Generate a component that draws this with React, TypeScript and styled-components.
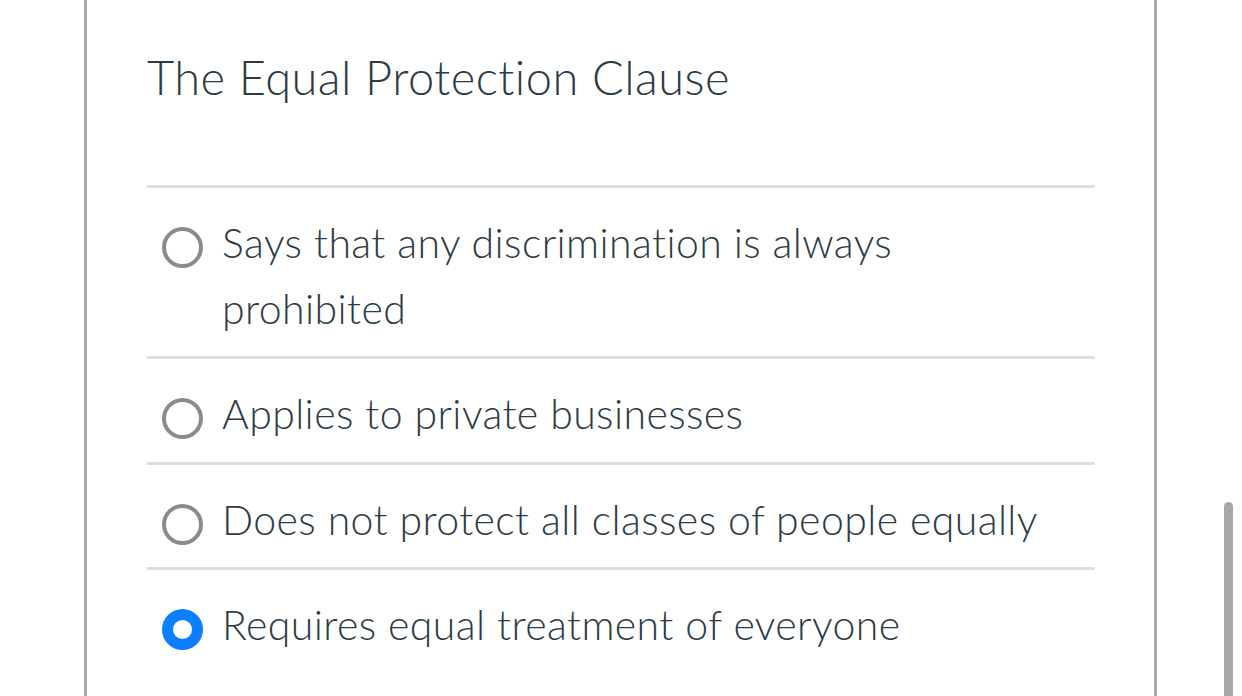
import React from "react";
import styled, { createGlobalStyle } from "styled-components";

const GlobalStyle = createGlobalStyle`
  html, body {
    margin: 0;
    padding: 0;
    background: #ffffff;
  }
  body {
    font-family: "Lato", "Liberation Sans", sans-serif;
    color: #2d3b45;
  }
`;

const Page = styled.div`
  position: relative;
  height: 696px;
  overflow: hidden;
  padding-left: 84px;
  box-sizing: border-box;
`;

const Card = styled.section`
  width: 1073px;
  min-height: 760px;
  box-sizing: border-box;
  border-left: 3px solid #a8a8a8;
  border-right: 3px solid #a8a8a8;
  padding: 49px 59px 0 60px;
`;

const Title = styled.h1`
  margin: 0 0 80px;
  font-size: 47px;
  line-height: 56px;
  font-weight: 300;
  color: #2d3b45;
  letter-spacing: 0.45px;
`;

const Options = styled.ul`
  list-style: none;
  margin: 0;
  padding: 0;
`;

const Option = styled.li`
  display: flex;
  align-items: flex-start;
  border-top: 3px solid #dedede;
  padding: 22px 0 15px;
`;

const Radio = styled.span<{ $checked?: boolean }>`
  flex: none;
  box-sizing: border-box;
  width: 41px;
  height: 41px;
  margin: 17px 19px 0 15px;
  border-radius: 50%;
  background: #ffffff;
  border: ${(p) => (p.$checked ? "11px solid #0b7fff" : "4px solid #8b8b8b")};
`;

const Label = styled.span`
  max-width: 835px;
  font-size: 41px;
  line-height: 65.5px;
  font-weight: 300;
  letter-spacing: 0.4px;
  color: #2d3b45;
`;

const ScrollThumb = styled.div`
  position: absolute;
  left: 1224px;
  top: 502px;
  width: 9px;
  height: 260px;
  border-radius: 5px;
  background: #a8a8a8;
`;

const answers = [
  { text: "Says that any discrimination is always prohibited", checked: false },
  { text: "Applies to private businesses", checked: false },
  { text: "Does not protect all classes of people equally", checked: false },
  { text: "Requires equal treatment of everyone", checked: true },
];

export default function App() {
  return (
    <>
      <GlobalStyle />
      <Page>
        <Card>
          <Title>The Equal Protection Clause</Title>
          <Options>
            {answers.map((a) => (
              <Option key={a.text}>
                <Radio $checked={a.checked} />
                <Label>{a.text}</Label>
              </Option>
            ))}
          </Options>
        </Card>
        <ScrollThumb />
      </Page>
    </>
  );
}
